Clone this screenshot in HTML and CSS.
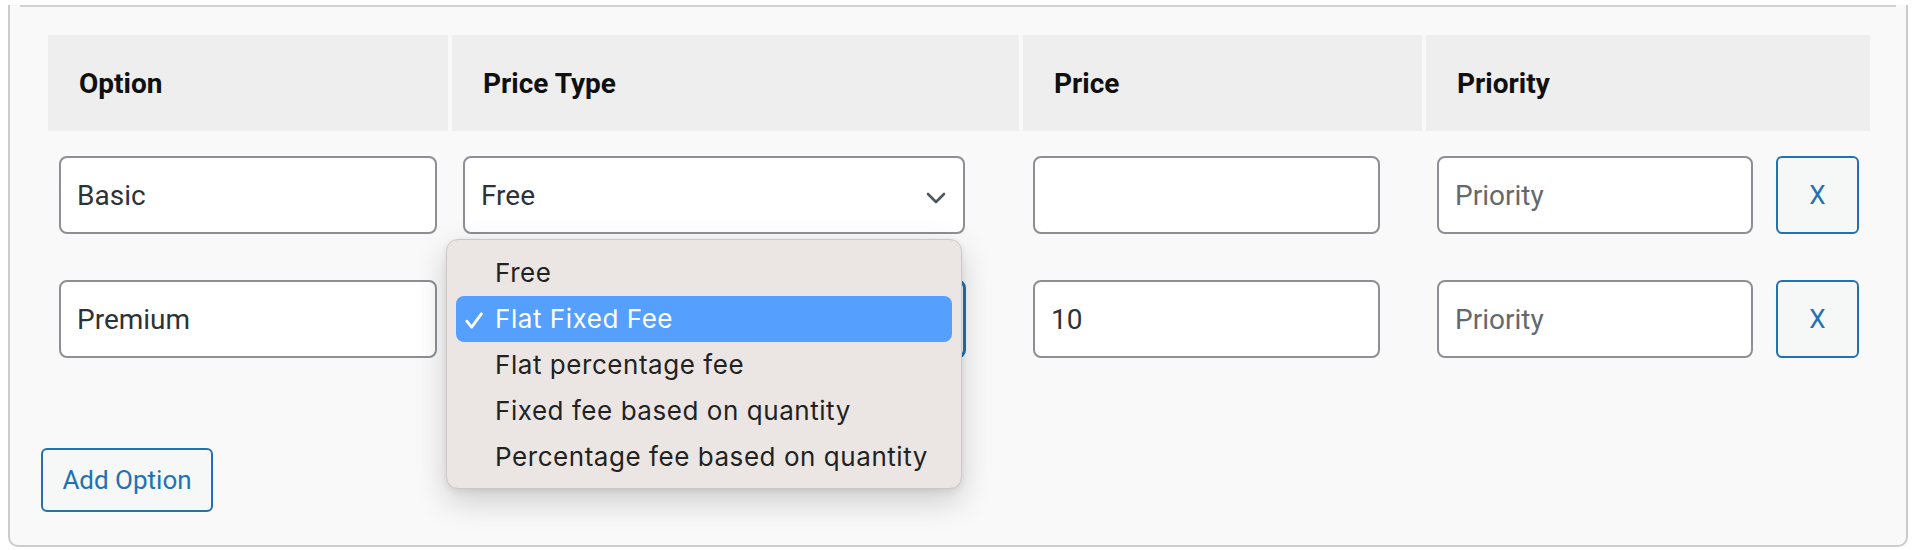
FILE: index.html
```html
<!DOCTYPE html>
<html lang="en">
<head>
<meta charset="utf-8">
<title>Options</title>
<link rel="stylesheet" href="styles.css">
</head>
<body>
<div class="panel">
  <div class="sep"></div>
  <div class="table">
    <div class="grid head">
      <div class="th">Option</div>
      <div class="th">Price Type</div>
      <div class="th">Price</div>
      <div class="th">Priority</div>
    </div>
    <div class="grid row first">
      <div class="td"><div class="field w-option">Basic</div></div>
      <div class="td menu-host">
        <div class="field select w-select">Free
          <svg class="chev" viewBox="0 0 20 12" width="20" height="12"><path d="M2 2 L10 10 L18 2" fill="none" stroke="#50575e" stroke-width="2.6" stroke-linecap="round" stroke-linejoin="round"/></svg>
        </div>
        <div class="menu">
          <div class="item">Free</div>
          <div class="item active"><svg class="check" viewBox="0 0 18 17" width="18" height="17"><path d="M1.8 9.2 L6.6 15.2 L16.4 1.8" fill="none" stroke="#ffffff" stroke-width="2.8" stroke-linecap="round" stroke-linejoin="round"/></svg>Flat Fixed Fee</div>
          <div class="item">Flat percentage fee</div>
          <div class="item">Fixed fee based on quantity</div>
          <div class="item">Percentage fee based on quantity</div>
        </div>
      </div>
      <div class="td td3"><div class="field w-price"></div></div>
      <div class="td"><div class="cell4"><div class="field w-priority placeholder">Priority</div><div class="btn xbtn">X</div></div></div>
    </div>
    <div class="grid row">
      <div class="td"><div class="field w-option">Premium</div></div>
      <div class="td"><div class="field select w-select focused">Flat Fixed Fee</div></div>
      <div class="td td3"><div class="field w-price">10</div></div>
      <div class="td"><div class="cell4"><div class="field w-priority placeholder">Priority</div><div class="btn xbtn">X</div></div></div>
    </div>
  </div>
  <div class="btn add">Add Option</div>
</div>
</body>
</html>
```

FILE: styles.css
```css
html, body {
  margin: 0;
  padding: 0;
  background: #ffffff;
}
body {
  margin: 0 8px 8px 8px;
  font-family: "Roboto", "Liberation Sans", sans-serif;
}
.panel {
  height: 542px;
  box-sizing: border-box;
  background: #f9f9f9;
  border: 2px solid #cccccc;
  border-top: none;
  border-radius: 0 0 10px 10px;
  padding: 0 10px 0 10px;
}
.sep {
  height: 2px;
  margin-top: 5px;
  background: #d2d2d2;
}
.table {
  margin: 28px 0 0 28px;
  width: 1822px;
}
.grid {
  display: grid;
  grid-template-columns: 400px 567px 399px 444px;
  column-gap: 4px;
}
.th {
  height: 96px;
  background: #eeeeee;
  display: flex;
  align-items: center;
  padding-left: 31px;
  font-weight: 700;
  font-size: 28px;
  color: #101010;
  box-sizing: border-box;
}
.row.first {
  margin-top: 25px;
}
.row + .row {
  margin-top: 46px;
}
.td {
  padding-left: 11px;
}
.td3 {
  padding-left: 10px;
}
.field {
  box-sizing: border-box;
  height: 78px;
  background: #ffffff;
  border: 2px solid #8c8f94;
  border-radius: 8px;
  display: flex;
  align-items: center;
  padding-left: 16px;
  font-size: 28px;
  color: #2c3338;
}
.placeholder {
  color: #646970;
}
.w-option { width: 378px; }
.w-select { width: 502px; position: relative; }
.w-price { width: 347px; }
.w-priority { width: 316px; }
.chev {
  position: absolute;
  right: 17px;
  top: 34px;
}
.focused {
  border-color: #2271b1;
  box-shadow: 0 0 0 1px #2271b1;
}
.cell4 {
  display: flex;
  gap: 23px;
}
.btn {
  box-sizing: border-box;
  border: 2px solid #2271b1;
  border-radius: 6px;
  background: #f6f7f7;
  color: #2271b1;
  font-size: 26px;
  display: flex;
  align-items: center;
  justify-content: center;
}
.xbtn {
  width: 83px;
  height: 78px;
}
.add {
  width: 172px;
  height: 64px;
  margin: 90px 0 0 21px;
}
.menu-host {
  position: relative;
}
.menu {
  position: absolute;
  left: -6px;
  top: 83px;
  width: 516px;
  height: 250px;
  box-sizing: border-box;
  background: #ebe6e3;
  border: 1px solid #cdc8c5;
  border-radius: 12px;
  box-shadow: 0 12px 32px rgba(0, 0, 0, 0.18), 0 2px 6px rgba(0, 0, 0, 0.08);
  padding-top: 10px;
  z-index: 10;
  font-family: "Inter", "Roboto", sans-serif;
}
.item {
  position: relative;
  height: 46px;
  line-height: 46px;
  margin: 0 9px;
  padding-left: 39px;
  font-size: 26px;
  letter-spacing: 0.55px;
  color: #222222;
  border-radius: 8px;
}
.item.active {
  background: #559ffe;
  color: #ffffff;
}
.check {
  position: absolute;
  left: 9px;
  top: 16px;
}
```
